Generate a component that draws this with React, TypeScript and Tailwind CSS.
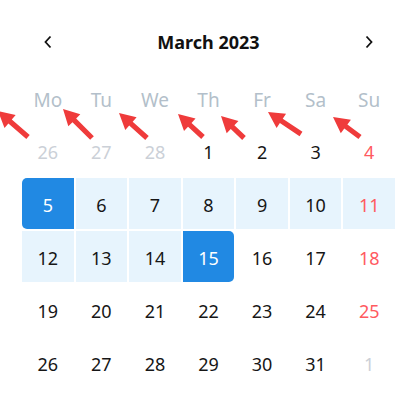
import React from "react";

type Day = {
  n: number;
  muted?: boolean;
  weekend?: boolean;
  range?: "start" | "end" | "mid";
};

const weekdays = ["Mo", "Tu", "We", "Th", "Fr", "Sa", "Su"];

const days: Day[] = [
  { n: 26, muted: true },
  { n: 27, muted: true },
  { n: 28, muted: true },
  { n: 1 },
  { n: 2 },
  { n: 3 },
  { n: 4, weekend: true },
  { n: 5, range: "start" },
  { n: 6, range: "mid" },
  { n: 7, range: "mid" },
  { n: 8, range: "mid" },
  { n: 9, range: "mid" },
  { n: 10, range: "mid" },
  { n: 11, weekend: true, range: "mid" },
  { n: 12, range: "mid" },
  { n: 13, range: "mid" },
  { n: 14, range: "mid" },
  { n: 15, range: "end" },
  { n: 16 },
  { n: 17 },
  { n: 18, weekend: true },
  { n: 19 },
  { n: 20 },
  { n: 21 },
  { n: 22 },
  { n: 23 },
  { n: 24 },
  { n: 25, weekend: true },
  { n: 26 },
  { n: 27 },
  { n: 28 },
  { n: 29 },
  { n: 30 },
  { n: 31 },
  { n: 1, muted: true },
];

// annotation arrows: [tipX, tipY, tailX, tailY]
const arrows: [number, number, number, number][] = [
  [-2, 111, 28, 137],
  [63, 109, 92, 138],
  [119, 113, 147, 138],
  [178, 114, 203, 137],
  [221, 116, 244, 138],
  [268, 112, 301, 134],
  [333, 117, 360, 137],
];

function arrowPoints(tx: number, ty: number, ex: number, ey: number) {
  const dx = ex - tx;
  const dy = ey - ty;
  const len = Math.hypot(dx, dy);
  const ux = dx / len;
  const uy = dy / len;
  const px = -uy;
  const py = ux;
  const head = 16;
  const hw = 8.5;
  const sw = 2.6;
  const bx = tx + ux * head;
  const by = ty + uy * head;
  const pts = [
    [tx, ty],
    [bx + px * hw, by + py * hw],
    [bx + px * sw, by + py * sw],
    [ex + px * sw, ey + py * sw],
    [ex - px * sw, ey - py * sw],
    [bx - px * sw, by - py * sw],
    [bx - px * hw, by - py * hw],
  ];
  return pts.map((p) => p.join(",")).join(" ");
}

function DayCell({ day }: { day: Day }) {
  let cls = "flex items-center justify-center pt-[3px] text-[18px] ";
  if (day.range === "start") cls += "bg-[#2189e3] text-white rounded-l-[5px]";
  else if (day.range === "end") cls += "bg-[#2189e3] text-white rounded-r-[5px]";
  else if (day.range === "mid") cls += "bg-[#e7f4fd] ";
  if (!day.range || day.range === "mid") {
    if (day.muted) cls += " text-[#cbd0d7]";
    else if (day.weekend) cls += " text-[#ff5a5f]";
    else cls += " text-[#161616]";
  }
  return <div className={cls}>{day.n}</div>;
}

export default function App() {
  return (
    <div className="relative w-[417px] h-[408px] overflow-hidden bg-white px-[22px] font-['Noto_Sans',sans-serif]">
      {/* Header */}
      <div className="mt-[16px] grid h-[52px] grid-cols-7 items-center gap-x-[2px]">
        <button className="flex justify-center text-[#111]">
          <svg width="10" height="14" viewBox="0 0 10 14" fill="none">
            <path d="M7.5 1.5 L2.5 7 L7.5 12.5" stroke="currentColor" strokeWidth="1.8" />
          </svg>
        </button>
        <div className="col-span-5 text-center text-[18px] font-bold text-[#111]">
          March 2023
        </div>
        <button className="flex justify-center text-[#111]">
          <svg width="10" height="14" viewBox="0 0 10 14" fill="none">
            <path d="M2.5 1.5 L7.5 7 L2.5 12.5" stroke="currentColor" strokeWidth="1.8" />
          </svg>
        </button>
      </div>

      {/* Weekdays */}
      <div className="mt-[8px] grid h-[49px] grid-cols-7 items-center gap-x-[2px] text-center text-[19px] text-[#b3bfca]">
        {weekdays.map((w) => (
          <div key={w}>{w}</div>
        ))}
      </div>

      {/* Days */}
      <div className="grid grid-cols-7 auto-rows-[51px] gap-x-[2px] gap-y-[2px]">
        {days.map((d, i) => (
          <DayCell key={i} day={d} />
        ))}
      </div>

      {/* Annotation arrows */}
      <svg className="pointer-events-none absolute left-0 top-0" width="417" height="408">
        {arrows.map((a, i) => (
          <polygon key={i} points={arrowPoints(a[0], a[1], a[2], a[3])} fill="#ef3b3b" />
        ))}
      </svg>
    </div>
  );
}
